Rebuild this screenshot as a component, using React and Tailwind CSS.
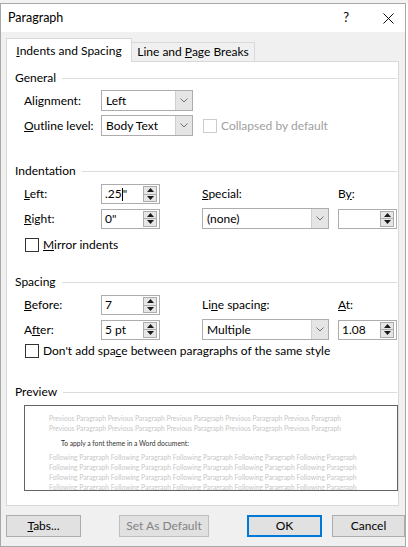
import React from "react";

const Chevron = () => (
  <svg width="8" height="5" viewBox="0 0 8 5">
    <path d="M0.5 0.5 L4 4 L7.5 0.5" fill="none" stroke="#707070" strokeWidth="1" />
  </svg>
);

const Combo = ({ value, w }) => (
  <div className={`${w} h-[21px] flex border border-[#adadad] bg-white`}>
    <span className="flex-1 pl-[4px] leading-[19px]">{value}</span>
    <div className="w-[17px] bg-[#e5e5e5] border-l border-[#cfcfcf] flex items-center justify-center">
      <Chevron />
    </div>
  </div>
);

const Tri = ({ up }) => (
  <svg width="7" height="4" viewBox="0 0 7 4">
    <path d={up ? "M0 4 L3.5 0 L7 4 Z" : "M0 0 L3.5 4 L7 0 Z"} fill="#1a1a1a" />
  </svg>
);

const Spin = ({ value }) => (
  <div className="w-[59px] h-[20px] flex items-center border border-[#adadad] bg-white">
    <span className="flex-1 pl-[3px] leading-[18px]">{value}</span>
    <div className="w-[14px] h-[16px] mr-[2px] flex flex-col border border-[#adadad] bg-[#e6e6e6]">
      <div className="flex-1 flex items-center justify-center border-b border-[#adadad]">
        <Tri up />
      </div>
      <div className="flex-1 flex items-center justify-center">
        <Tri />
      </div>
    </div>
  </div>
);

const Section = ({ title, mt }) => (
  <div className={`${mt} h-[14px] flex items-center pl-[8px] pr-[1px]`}>
    <span>{title}</span>
    <div className="flex-1 h-px bg-[#dcdcdc] ml-[6px]" />
  </div>
);

const Check = ({ disabled }) => (
  <div
    className={`w-[14px] h-[14px] border bg-white ${
      disabled ? "border-[#cccccc]" : "border-[#333333]"
    }`}
  />
);

const prev = "Previous Paragraph Previous Paragraph Previous Paragraph Previous Paragraph Previous Paragraph";
const follow =
  "Following Paragraph Following Paragraph Following Paragraph Following Paragraph Following Paragraph";

const Button = ({ children, w, ml, ok, disabled }) => (
  <div
    className={`${w} ${ml} h-[22px] flex items-center justify-center bg-[#e1e1e1] ${
      ok ? "border-2 border-[#0078d7]" : disabled ? "border border-[#bfbfbf] text-[#838383]" : "border border-[#adadad]"
    }`}
  >
    {children}
  </div>
);

export default function App() {
  return (
    <div className="w-[408px] h-[547px] bg-white overflow-hidden font-['Lato',sans-serif] text-[12px] text-black">
      <div className="h-[3px] bg-[#f2f2f2]" />
      <div className="w-[406px] h-[544px] border border-[#a8a8a8] flex flex-col">
        {/* title bar */}
        <div className="h-[28px] bg-white flex items-center pl-[7px] shrink-0">
          <span className="text-[12.5px] flex-1">Paragraph</span>
          <span className="text-[13px] mr-[34px]">?</span>
          <svg width="11" height="11" viewBox="0 0 11 11" className="mr-[11px]">
            <path d="M0.5 0.5 L10.5 10.5 M10.5 0.5 L0.5 10.5" stroke="#111" strokeWidth="1" />
          </svg>
        </div>

        <div className="flex-1 bg-[#f0f0f0] flex flex-col">
          {/* tabs */}
          <div className="mt-[6px] h-[23px] flex items-end pl-[5px]">
            <div className="relative z-10 -mb-px h-[24px] w-[126px] bg-white border-l border-t border-r border-[#d9d9d9] flex items-center justify-center">
              <span>
                <u>I</u>ndents and Spacing
              </span>
            </div>
            <div className="h-[19px] w-[124px] -ml-px border-l border-t border-r border-[#d9d9d9] flex items-center justify-center">
              <span>
                Line and <u>P</u>age Breaks
              </span>
            </div>
          </div>

          {/* panel */}
          <div className="ml-[5px] w-[393px] h-[445px] bg-white border border-[#d9d9d9] flex flex-col">
            <Section title="General" mt="mt-[9px]" />
            <div className="mt-[5px] ml-[17px] flex items-center">
              <span className="w-[77px]">
                Ali<u>g</u>nment:
              </span>
              <Combo value="Left" w="w-[92px]" />
            </div>
            <div className="mt-[4px] ml-[17px] flex items-center">
              <span className="w-[77px]">
                <u>O</u>utline level:
              </span>
              <Combo value="Body Text" w="w-[92px]" />
              <div className="ml-[10px]">
                <Check disabled />
              </div>
              <span className="ml-[4px] text-[#a0a0a0]">Collapsed by default</span>
            </div>

            <Section title="Indentation" mt="mt-[28px]" />
            <div className="mt-[6px] ml-[17px] flex items-center">
              <span className="w-[77px]">
                <u>L</u>eft:
              </span>
              <Spin
                value={
                  <span>
                    .25<span className="inline-block w-px h-[13px] bg-black align-middle" />"
                  </span>
                }
              />
              <span className="ml-[42px] w-[136px]">
                <u>S</u>pecial:
              </span>
              <span>
                B<u>y</u>:
              </span>
            </div>
            <div className="mt-[4px] ml-[17px] flex items-center">
              <span className="w-[77px]">
                <u>R</u>ight:
              </span>
              <Spin value={'0"'} />
              <div className="ml-[42px]">
                <Combo value="(none)" w="w-[127px]" />
              </div>
              <div className="ml-[9px]">
                <Spin value="" />
              </div>
            </div>
            <div className="mt-[9px] ml-[18px] h-[14px] flex items-center">
              <Check />
              <span className="ml-[4px]">
                <u>M</u>irror indents
              </span>
            </div>

            <Section title="Spacing" mt="mt-[23px]" />
            <div className="mt-[6px] ml-[17px] flex items-center">
              <span className="w-[77px]">
                <u>B</u>efore:
              </span>
              <Spin value="7" />
              <span className="ml-[42px] w-[136px]">
                Li<u>n</u>e spacing:
              </span>
              <span>
                <u>A</u>t:
              </span>
            </div>
            <div className="mt-[4px] ml-[17px] flex items-center">
              <span className="w-[77px]">
                A<u>f</u>ter:
              </span>
              <Spin value="5 pt" />
              <div className="ml-[42px]">
                <Combo value="Multiple" w="w-[127px]" />
              </div>
              <div className="ml-[9px]">
                <Spin value="1.08" />
              </div>
            </div>
            <div className="mt-[4px] ml-[18px] h-[14px] flex items-center">
              <Check />
              <span className="ml-[4px]">
                Don't add spa<u>c</u>e between paragraphs of the same style
              </span>
            </div>

            <Section title="Preview" mt="mt-[27px]" />
            <div className="mt-[6px] ml-[17px] w-[374px] h-[86px] border border-[#646464] overflow-hidden pt-[7px] text-[6.75px] leading-[10px] whitespace-nowrap">
              <div className="pl-[24px] text-[#c6c6c6]">{prev}</div>
              <div className="pl-[24px] text-[#c6c6c6]">{prev}</div>
              <div className="pl-[36px] mt-[5px] text-[#333333]">To apply a font theme in a Word document:</div>
              <div className="pl-[24px] mt-[4px] text-[#c6c6c6]">{follow}</div>
              <div className="pl-[24px] text-[#c6c6c6]">{follow}</div>
              <div className="pl-[24px] text-[#c6c6c6]">{follow}</div>
              <div className="pl-[24px] text-[#c6c6c6]">{follow}</div>
            </div>
          </div>

          {/* buttons */}
          <div className="mt-[9px] flex">
            <Button w="w-[75px]" ml="ml-[5px]">
              <span>
                <u>T</u>abs...
              </span>
            </Button>
            <Button w="w-[90px]" ml="ml-[38px]" disabled>
              Set As Default
            </Button>
            <Button w="w-[75px]" ml="ml-[38px]" ok>
              OK
            </Button>
            <Button w="w-[73px]" ml="ml-[10px]">
              Cancel
            </Button>
          </div>
        </div>
      </div>
    </div>
  );
}
